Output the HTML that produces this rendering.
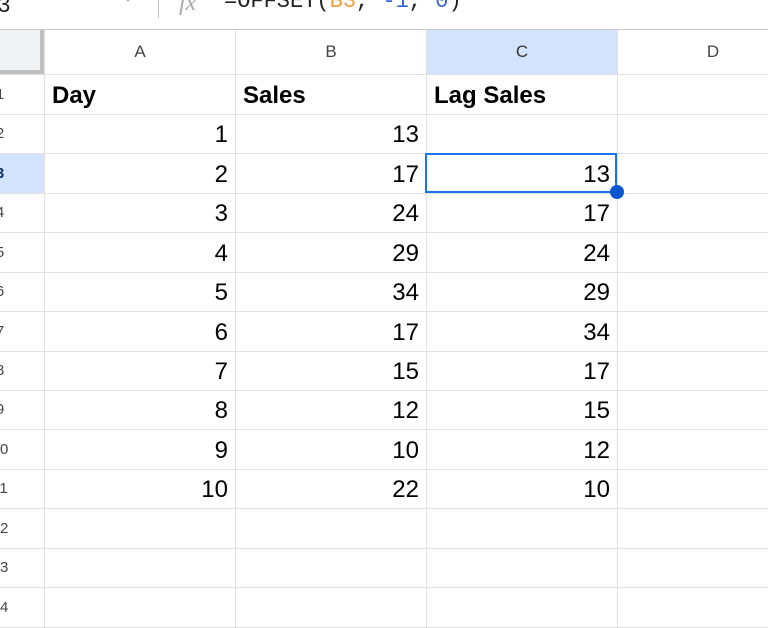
<!DOCTYPE html>
<html><head><style>
body{margin:0;width:768px;height:627px;overflow:hidden;background:#fff;font-family:"Liberation Sans",Arial,sans-serif;position:relative}
.a{position:absolute}
.vl{position:absolute;width:1px;background:#e1e1e1;top:30px;height:597px}
.hl{position:absolute;height:1px;background:#e1e1e1;left:0;width:768px}
.c{position:absolute;font-size:24px;color:#000;height:39px;line-height:42px}
.r{text-align:right}
.h{position:absolute;font-size:17px;color:#444;top:30px;height:44px;line-height:44px;text-align:center}
.rn{position:absolute;font-size:15px;color:#444;left:-10px;width:20px;text-align:center;height:39px;line-height:39px}
</style></head><body>
<div class="a" style="left:0;top:0;width:768px;height:29px;background:#fff;border-bottom:1px solid #c7c7c7"></div>
<div class="a" style="left:-2px;top:-8px;font-size:22px;color:#222">3</div>
<div class="a" style="left:121px;top:-6px;width:0;height:0;border-left:7px solid transparent;border-right:7px solid transparent;border-top:7px solid #444"></div>
<div class="a" style="left:158px;top:0;width:1px;height:18px;background:#c7c7c7"></div>
<div class="a" style="left:179px;top:-10px;font-size:24px;font-style:italic;color:#aaa;font-family:'Liberation Serif',serif">fx</div>
<div class="a" style="left:224px;top:-11px;font-size:22px;font-family:'Liberation Mono',monospace;color:#222;white-space:pre">=OFFSET(<span style="color:#f39c3c">B3</span>, <span style="color:#3367d6">-1</span>, <span style="color:#3367d6">0</span>)</div>
<div class="a" style="left:0;top:30px;width:40px;height:40px;background:#f1f3f4;border-right:4px solid #c0c0c0;border-bottom:4px solid #c0c0c0"></div>
<div class="a" style="left:427px;top:30px;width:190px;height:44px;background:#d3e3fd"></div>
<div class="a" style="left:0;top:154px;width:44px;height:39px;background:#d3e3fd"></div>
<div class="h" style="left:45px;width:190px">A</div>
<div class="h" style="left:236px;width:190px">B</div>
<div class="h" style="left:427px;width:190px;color:#333">C</div>
<div class="h" style="left:618px;width:190px">D</div>
<div class="vl" style="left:44px"></div>
<div class="vl" style="left:235px"></div>
<div class="vl" style="left:426px"></div>
<div class="vl" style="left:617px"></div>
<div class="hl" style="top:74px"></div>
<div id="g"></div>
<script>
var d=[["Day","Sales","Lag Sales"],[1,13,""],[2,17,13],[3,24,17],[4,29,24],[5,34,29],[6,17,34],[7,15,17],[8,12,15],[9,10,12],[10,22,10],["","",""],["","",""],["","",""]];
var h="";
for(var i=0;i<14;i++){var t=75+i*39.43;
h+='<div class="hl" style="top:'+(t+39).toFixed(0)+'px"></div>';
h+='<div class="rn" style="top:'+t.toFixed(0)+'px;'+(i==2?'color:#0b2f6b;font-weight:bold':'')+'">'+(i+1)+'</div>';
for(var j=0;j<3;j++){var v=d[i][j];var l=45+j*191;
if(i==0)h+='<div class="c" style="font-weight:bold;left:'+(l+7)+'px;top:'+t.toFixed(0)+'px">'+v+'</div>';
else h+='<div class="c r" style="left:'+l+'px;width:183px;top:'+t.toFixed(0)+'px">'+v+'</div>';}}
document.getElementById("g").innerHTML=h;
</script>
<div class="a" style="left:425px;top:153px;width:188px;height:36px;border:2px solid #1a73e8"></div>
<div class="a" style="left:610px;top:185px;width:14px;height:14px;border-radius:50%;background:#0b57d0"></div>
</body></html>
